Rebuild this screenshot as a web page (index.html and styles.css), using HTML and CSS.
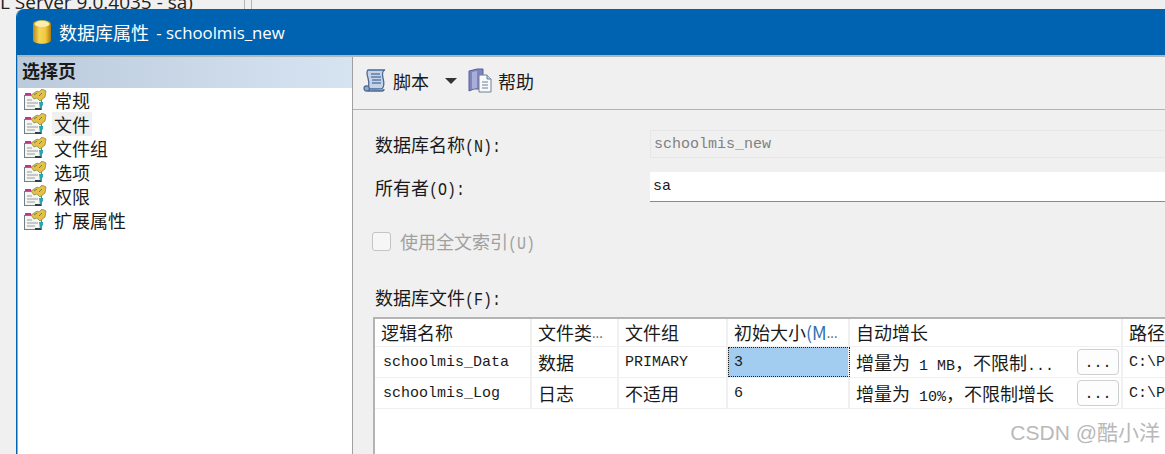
FILE: index.html
```html
<!DOCTYPE html>
<html lang="zh-CN">
<head>
    <meta charset="UTF-8">
    <title>数据库属性 - schoolmis_new</title>
    <link rel="stylesheet" href="styles.css">
</head>
<body>
    <svg class="defs" width="0" height="0">
        <symbol id="page-icon" viewBox="0 0 24 22">
            <rect x="1.5" y="6.5" width="17" height="14" fill="#f6f6f0" stroke="#6f7f86"/>
            <path d="M2 5h6" stroke="#c0348f" stroke-width="2"/>
            <path d="M4 11h5M4 14h11M4 17h8" stroke="#b3bcc0" stroke-width="1.4"/>
            <path d="M12 19h6v2h-6z" fill="#2f3f4a"/>
            <path d="M17 20l3-4v-3h-4z" fill="#2aa5b5"/>
            <path d="M8 6l6-4 2 1 3-3 4 2-1 6-5 4-3-3-3 1z" fill="#e6c040" stroke="#8f8a52" stroke-width=".8"/>
            <path d="M11 6l3-2M16 7l3-3" stroke="#7a7a4a"/>
        </symbol>
    </svg>

    <div class="behind">
        <span class="behind-text">L Server 9.0.4035 - sa)</span>
        <span class="behind-line"></span>
        <span class="behind-line"></span>
    </div>

    <div class="dialog">
        <div class="titlebar">
            <svg class="db-icon" width="20" height="26" viewBox="0 0 20 26">
                <defs>
                    <linearGradient id="db-fill" x1="0" x2="1" y1="0" y2="0">
                        <stop offset="0" stop-color="#b98a16"/>
                        <stop offset=".35" stop-color="#f6d65a"/>
                        <stop offset=".7" stop-color="#f0c93a"/>
                        <stop offset="1" stop-color="#a87a12"/>
                    </linearGradient>
                </defs>
                <path d="M1 5c0-5 18-5 18 0v16c0 5-18 5-18 0z" fill="url(#db-fill)"/>
                <ellipse cx="10" cy="5" rx="7.5" ry="3" fill="#fbeeb0"/>
            </svg>
            <span class="title-cjk">数据库属性</span>
            <span class="title-latin">&nbsp;- schoolmis_new</span>
        </div>

        <div class="panes">
            <div class="sidebar">
                <div class="sidebar-head">选择页</div>
                <ul class="pages">
                    <li><svg width="24" height="22"><use href="#page-icon"/></svg><span>常规</span></li>
                    <li class="selected"><svg width="24" height="22"><use href="#page-icon"/></svg><span>文件</span></li>
                    <li><svg width="24" height="22"><use href="#page-icon"/></svg><span>文件组</span></li>
                    <li><svg width="24" height="22"><use href="#page-icon"/></svg><span>选项</span></li>
                    <li><svg width="24" height="22"><use href="#page-icon"/></svg><span>权限</span></li>
                    <li><svg width="24" height="22"><use href="#page-icon"/></svg><span>扩展属性</span></li>
                </ul>
            </div>

            <div class="content">
                <div class="toolbar">
                    <svg width="25" height="24" viewBox="0 0 25 24">
                        <path d="M5 1h17c-3 1-3 4-2 8 1 4 2 8-1 11H4c3-3 2-7 1-11C4 6 3 3 5 1z" fill="#c4d3e8" stroke="#4a6a94" stroke-width="1.3"/>
                        <path d="M1 19c0-2 3-3 5-1 1 2 0 4-2 4-2 0-3-1-3-3zM4 22h15c1 0 2-1 2-2" fill="#8fa9cc" stroke="#4a6a94" stroke-width="1.3"/>
                        <path d="M8 5h9M8 8h10M9 11h9M9 14h9" stroke="#5d7da6" stroke-width="1.3"/>
                    </svg>
                    <span class="tool-text">脚本</span>
                    <span class="caret"></span>
                    <svg class="help-icon" width="25" height="25" viewBox="0 0 25 25">
                        <path d="M1 3l8-2h6v20H6l-5 2z" fill="#7d84c0" stroke="#5a6098"/>
                        <path d="M4 4l5-1v17l-5 1z" fill="#a9aed8"/>
                        <path d="M11 7h8l4 4v13H11z" fill="#f7f9fc" stroke="#6f7f96"/>
                        <path d="M19 7v4h4" fill="#c8d2e0" stroke="#6f7f96"/>
                        <path d="M14 14h6M14 17h6M14 20h6" stroke="#6f7f96"/>
                    </svg>
                    <span class="tool-text">帮助</span>
                </div>

                <div class="form">
                    <div class="field name-field">
                        <label>数据库名称<span class="mono tall">(N):</span></label>
                        <div class="textbox disabled mono">schoolmis_new</div>
                    </div>
                    <div class="field owner-field">
                        <label>所有者<span class="mono tall">(O):</span></label>
                        <div class="textbox owner mono">sa</div>
                    </div>
                    <div class="fulltext">
                        <span class="checkbox"></span>
                        <span>使用全文索引<span class="mono tall">(U)</span></span>
                    </div>
                    <div class="files-label">数据库文件<span class="mono tall">(F):</span></div>
                </div>

                <div class="grid">
                    <div class="row head">
                        <div class="cell c1">逻辑名称</div>
                        <div class="cell c2">文件类<span class="dots">...</span></div>
                        <div class="cell c3">文件组</div>
                        <div class="cell c4">初始大小<span class="sel-text">(M</span><span class="dots">...</span></div>
                        <div class="cell c5">自动增长</div>
                        <div class="cell c6">路径</div>
                    </div>
                    <div class="row">
                        <div class="cell c1 name mono">schoolmis_Data</div>
                        <div class="cell c2">数据</div>
                        <div class="cell c3 mono">PRIMARY</div>
                        <div class="cell c4 active mono">3</div>
                        <div class="cell c5 grow">
                            <span>增量为<span class="mono"> 1 MB</span>，不限制<span class="mono">...</span></span>
                            <span class="more mono">...</span>
                        </div>
                        <div class="cell c6 mono">C:\P</div>
                    </div>
                    <div class="row">
                        <div class="cell c1 name mono">schoolmis_Log</div>
                        <div class="cell c2">日志</div>
                        <div class="cell c3">不适用</div>
                        <div class="cell c4 mono">6</div>
                        <div class="cell c5 grow">
                            <span>增量为<span class="mono"> 10%</span>，不限制增长</span>
                            <span class="more mono">...</span>
                        </div>
                        <div class="cell c6 mono">C:\P</div>
                    </div>
                </div>
            </div>
        </div>
    </div>

    <div class="watermark">CSDN @酷小洋</div>
</body>
</html>
```

FILE: styles.css
```css
html, body {
    height: 100%;
}
body {
    margin: 0;
    width: 1165px;
    height: 454px;
    overflow: hidden;
    position: relative;
    background: #f0f0f0;
    color: #1a1a1a;
    font-family: "Noto Sans CJK SC", "Liberation Sans", sans-serif;
    font-size: 18px;
}
.defs {
    display: block;
    height: 0;
}
.mono {
    font-family: "Liberation Mono", "Noto Sans CJK SC", monospace;
    font-size: 15px;
    white-space: pre;
}
.tall {
    display: inline-block;
    line-height: 18px;
    transform: translateY(-1px) scaleY(1.2);
}

/* window behind the dialog, only its bottom edge shows */
.behind {
    height: 9px;
    overflow: hidden;
    display: flex;
    background: #f0f0f0;
}
.behind-text {
    width: 244px;
    line-height: 20px;
    margin-top: -8px;
    font-family: "Open Sans", sans-serif;
    font-size: 19px;
    white-space: pre;
    color: #222;
}
.behind-line {
    width: 1px;
    margin-right: 6px;
    background: #b5b5b5;
}

.dialog {
    margin-left: 16px;
    height: 445px;
    display: flex;
    flex-direction: column;
    border-left: 1px solid #0063b1;
    border-top-left-radius: 8px;
    overflow: hidden;
    background: #f0f0f0;
}
.titlebar {
    height: 46px;
    flex: none;
    display: flex;
    align-items: center;
    padding-left: 15px;
    background: #0063b1;
    color: #fff;
}
.db-icon {
    margin-right: 7px;
}
.title-latin {
    margin-left: 3px;
    font-family: "Open Sans", sans-serif;
    font-size: 16.8px;
}

.panes {
    flex: 1;
    display: flex;
    min-height: 0;
    border-top: 2px solid #b4b4b4;
}
.sidebar {
    width: 334px;
    flex: none;
    background: #fff;
    border-left: 1px solid #a9a9a9;
    border-right: 1px solid #a0a0a0;
}
.sidebar-head {
    height: 31px;
    line-height: 26px;
    padding-left: 4px;
    font-weight: 700;
    background: linear-gradient(90deg, #bccbdc, #d6e4f2);
}
.pages {
    list-style: none;
    margin: 0;
    padding: 0 0 0 5px;
}
.pages li {
    height: 24px;
    display: flex;
    align-items: center;
    line-height: 24px;
}
.pages svg {
    margin-right: 5px;
}
.pages span {
    padding: 0 2px;
}
.pages .selected span {
    background: #f0f0f0;
}

.content {
    flex: 1;
    min-width: 0;
    display: flex;
    flex-direction: column;
}
.toolbar {
    height: 53px;
    flex: none;
    box-sizing: border-box;
    padding: 0 0 5px 10px;
    display: flex;
    align-items: center;
    border-bottom: 1px solid #b4b4b4;
}
.tool-text {
    margin-left: 5px;
}
.caret {
    width: 0;
    height: 0;
    margin: 0 11px 0 16px;
    border: 6px solid transparent;
    border-top-color: #333;
    border-bottom-width: 0;
}
.form {
    padding: 20px 0 0 22px;
    height: 207px;
    flex: none;
    box-sizing: border-box;
}
.field {
    display: flex;
    align-items: center;
}
.field label {
    width: 275px;
    flex: none;
}
.textbox {
    flex: 1;
    box-sizing: border-box;
    display: flex;
    align-items: center;
    padding-left: 3px;
}
.disabled {
    height: 28px;
    color: #808080;
    border: 1px solid #e6e6e6;
    border-right: none;
}
.owner-field {
    margin-top: 14px;
}
.owner {
    height: 30px;
    background: #fff;
    border-bottom: 1px solid #8a8a8a;
}
.fulltext {
    display: flex;
    align-items: center;
    margin: 28px 0 0 -3px;
    height: 22px;
    color: #a0a0a0;
}
.checkbox {
    width: 17px;
    height: 17px;
    margin-right: 9px;
    border: 1px solid #c4c4c4;
    border-radius: 3px;
    background: #f6f6f6;
}
.files-label {
    margin-top: 34px;
    line-height: 22px;
}

.grid {
    flex: 1;
    margin-left: 20px;
    background: #fff;
    border-top: 2px solid #b4b4b4;
    border-left: 2px solid #b4b4b4;
}
.row {
    display: flex;
    height: 30px;
    border-bottom: 1px solid #f0f0f0;
}
.row.head {
    height: 27px;
}
.cell {
    flex: none;
    box-sizing: border-box;
    display: flex;
    align-items: center;
    padding: 0 0 1px 6px;
    border-right: 2px solid #f0f0f0;
    white-space: nowrap;
}
.cell.mono {
    padding-bottom: 0;
    padding-top: 1px;
}
.c1 { width: 157px; }
.c2 { width: 87px; }
.c3 { width: 109px; }
.c4 { width: 122px; }
.c5 { width: 273px; }
.c6 { flex: 1; }
.name {
    padding-left: 8px;
}
.dots {
    color: #555;
    font-size: 13px;
}
.sel-text {
    color: #2f6fb0;
}
.active {
    background: #a3cdf0;
    outline: 1px dotted #222;
    outline-offset: -1px;
}
.grow {
    justify-content: space-between;
    padding-right: 2px;
}
.more {
    width: 42px;
    height: 26px;
    box-sizing: border-box;
    text-align: center;
    line-height: 28px;
    background: #fdfdfd;
    border: 1px solid #d0d0d0;
    border-radius: 4px;
}

.watermark {
    position: absolute;
    right: 5px;
    bottom: 7px;
    color: #b9b9b9;
    font-family: "Liberation Sans", "Noto Sans CJK SC", sans-serif;
    font-size: 21px;
    line-height: 28px;
}
```
